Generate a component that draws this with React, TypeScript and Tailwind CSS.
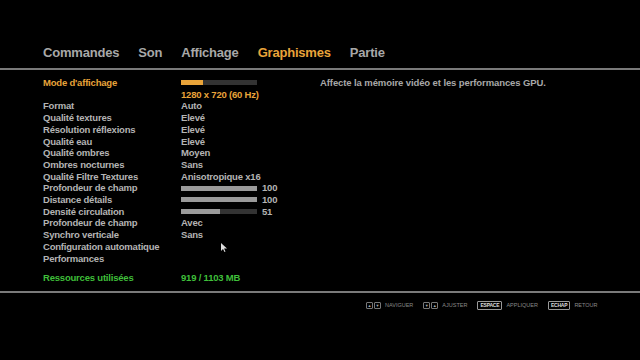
import React from "react"

const rows: { label: string; value?: string; bar?: number }[] = [
  { label: "Format", value: "Auto" },
  { label: "Qualité textures", value: "Elevé" },
  { label: "Résolution réflexions", value: "Elevé" },
  { label: "Qualité eau", value: "Elevé" },
  { label: "Qualité ombres", value: "Moyen" },
  { label: "Ombres nocturnes", value: "Sans" },
  { label: "Qualité Filtre Textures", value: "Anisotropique x16" },
  { label: "Profondeur de champ", bar: 100 },
  { label: "Distance détails", bar: 100 },
  { label: "Densité circulation", bar: 51 },
  { label: "Profondeur de champ", value: "Avec" },
  { label: "Synchro verticale", value: "Sans" },
  { label: "Configuration automatique" },
  { label: "Performances" },
]

const tabs = ["Commandes", "Son", "Affichage", "Graphismes", "Partie"]

function Key({ up }: { up: boolean }) {
  return (
    <span className="flex h-[7px] w-[7px] items-center justify-center rounded-[1px] border border-[#777]">
      <span className="text-[4px] leading-none text-[#aaa]">{up ? "▲" : "▼"}</span>
    </span>
  )
}

export default function App() {
  return (
    <div className="relative h-[360px] w-[640px] overflow-hidden bg-black font-['Liberation_Sans',Arial,sans-serif] font-bold">
      <div className="flex h-[68px] items-end gap-[19px] pb-[7px] pl-[43px] text-[13px] leading-[16px] tracking-[-0.2px] text-[#a8a8a8]">
        {tabs.map((t) => (
          <span key={t} className={t === "Graphismes" ? "text-[#e9a43a]" : ""}>
            {t}
          </span>
        ))}
      </div>
      <div className="h-[2px] w-full bg-[#7a7a7a]" />

      <div className="flex h-[221px] text-[9.5px] leading-[11.7px] tracking-[-0.2px] text-[#b4b4b4]">
        <div className="w-[320px] shrink-0 pl-[43px] pt-[7px]">
          <div className="flex text-[#e9a43a]">
            <span className="w-[138px]">Mode d'affichage</span>
            <div className="mt-[3px] flex h-[5px] w-[76px] bg-[#333]">
              <div className="h-full w-[22px] bg-[#e9a43a]" />
            </div>
          </div>
          <div className="pl-[138px] text-[#e9a43a]">1280 x 720 (60 Hz)</div>
          {rows.map((r, i) => (
            <div key={i} className="flex">
              <span className="w-[138px] shrink-0">{r.label}</span>
              {r.value && <span>{r.value}</span>}
              {r.bar !== undefined && (
                <div className="flex items-center">
                  <div className="flex h-[5px] w-[76px] bg-[#333]">
                    <div className="h-full bg-[#9a9a9a]" style={{ width: `${(r.bar / 100) * 76}px` }} />
                  </div>
                  <span className="pl-[5px]">{r.bar}</span>
                </div>
              )}
            </div>
          ))}
          <div className="mt-[8px] flex text-[#3fbf3a]">
            <span className="w-[138px]">Ressources utilisées</span>
            <span>919 / 1103 MB</span>
          </div>
        </div>
        <div className="pt-[7px] tracking-[-0.1px] text-[#a8a8a8]">Affecte la mémoire vidéo et les performances GPU.</div>
      </div>

      <div className="h-[2px] w-full bg-[#7a7a7a]" />

      <div className="flex items-center gap-[4px] pl-[366px] pt-[8px] text-[5.5px] font-normal text-[#888]">
        <div className="flex gap-[1px]">
          <Key up />
          <Key up={false} />
        </div>
        <span className="mr-[6px]">NAVIGUER</span>
        <div className="flex gap-[1px]">
          <Key up={false} />
          <Key up />
        </div>
        <span className="mr-[6px]">AJUSTER</span>
        <span className="rounded-[1px] border border-[#999] px-[2px] text-[5px] font-bold leading-[7px] tracking-[-0.2px] text-[#ddd]">ESPACE</span>
        <span className="mr-[6px]">APPLIQUER</span>
        <span className="rounded-[1px] border border-[#999] px-[2px] text-[5px] font-bold leading-[7px] tracking-[-0.2px] text-[#ddd]">ECHAP</span>
        <span>RETOUR</span>
      </div>

      <svg className="absolute left-[221px] top-[243px]" width="6" height="9" viewBox="0 0 6 9">
        <path d="M0 0 L0 8 L2 6 L3.5 9 L4.5 8.5 L3 5.5 L6 5.5 Z" fill="#ddd" />
      </svg>
    </div>
  )
}
